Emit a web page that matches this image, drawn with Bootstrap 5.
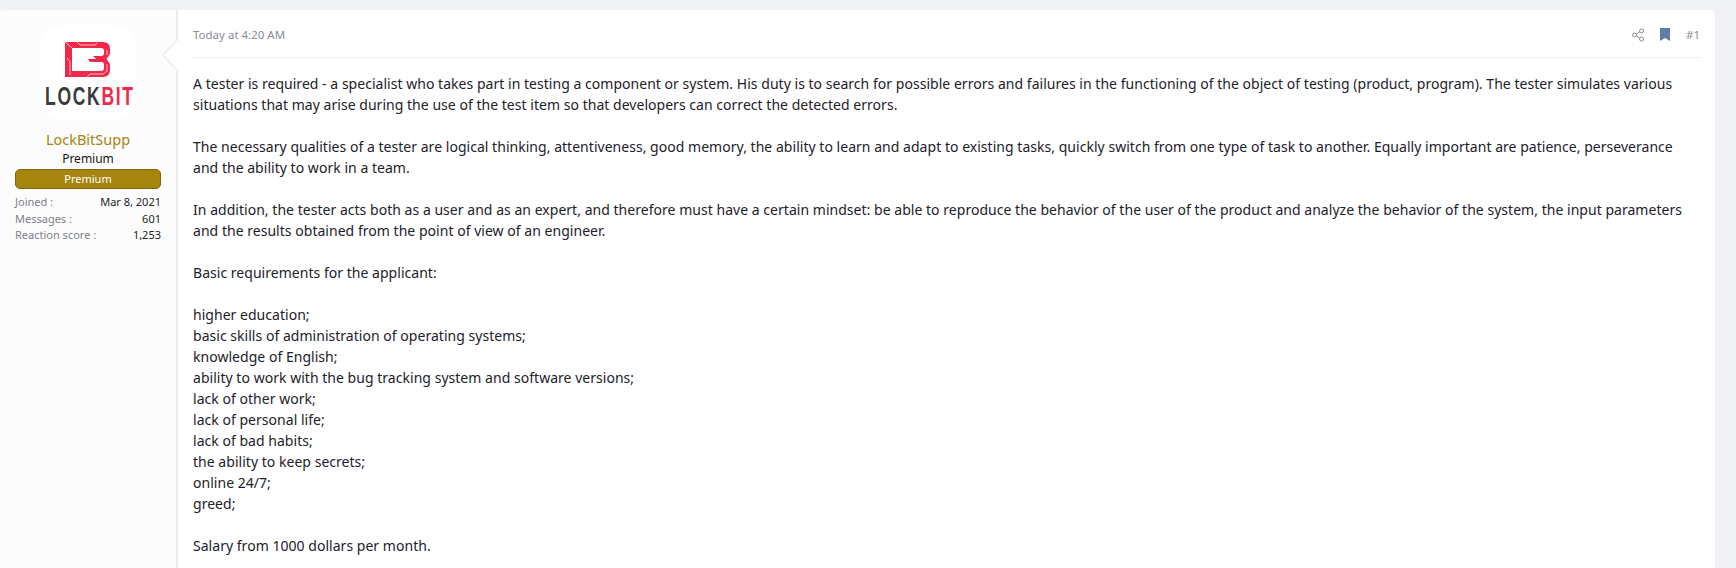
<!DOCTYPE html>
<html lang="en">
<head>
  <meta charset="UTF-8" />
  <title>Thread post</title>
  <link href="https://cdn.jsdelivr.net/npm/bootstrap@5.3.6/dist/css/bootstrap.min.css" rel="stylesheet"/>
  <style>
    html,body{height:568px;overflow:hidden}
    body{background:#f1f2f6;color:#1d2129;font-family:"Noto Sans","Open Sans",sans-serif;font-size:14px;line-height:21px;padding-top:10px}
    .post-box{width:1715px;height:558px;overflow:hidden;background:#fff;border-radius:3px 4px 0 0;box-shadow:0 0 2px rgba(0,0,0,.06)}
    .post-user{width:178px;flex:none;background:#fcfcfc;border-right:2px solid #ececef;padding:15px 15px 0;position:relative;text-align:center}
    .user-arrow{position:absolute;right:-2px;top:29px;display:block}
    .avatar-box{width:96px;height:96px;background:#fff;border-radius:24px;margin:0 auto 8px 25px}
    .user-name{color:#a5850e;font-size:14.5px;line-height:20px}
    .user-title{font-size:12px;line-height:17px;color:#141414;margin-top:1px}
    .user-banner{background:#a5850e;border:1px solid #7d650c;border-radius:5px;color:#fff;font-size:11px;line-height:18px;height:20px;margin-top:2px}
    .user-stats{font-size:11px;line-height:16.5px;margin-top:5px}
    .user-stats span:first-child{color:#7d7f88}
    .post-main{flex:1;padding:0 15px;min-width:0}
    .post-head{height:48px;padding-top:2px;border-bottom:1px solid #eeeef1;color:#8a8c94;font-size:11.5px}
    .post-body{padding-top:15px;white-space:pre;letter-spacing:.03px}
  </style>
</head>
<body>
  <div class="post-box d-flex">
    <!-- user column -->
    <div class="post-user">
      <svg class="user-arrow" width="17" height="32" viewBox="0 0 17 32"><path fill="#fff" stroke="#ececef" stroke-width="1.5" d="M16 1 2 16 16 31"/><path fill="#fff" d="M15 2H17V30H15Z"/></svg>
      <div class="avatar-box">
        <svg width="96" height="96" viewBox="0 0 96 96">
          <g transform="translate(25 17)">
            <path fill="#f0284a" fill-rule="evenodd" d="M0 0H38Q45 0 45 7V12L41.5 17 45 22V28Q45 35 38 35H0ZM7 6H36Q39 6 39 9V11Q39 14 36 14H21L25 20H36Q39 20 39 23V26Q39 29 36 29H7Z"/>
            <path fill="#fff" d="M7 6 17 17H31L27 13H21Z"/>
            <path fill="none" stroke="#fff" stroke-width=".7" d="M0 0 7 6M2 16 5 20V33M12 0 15 3H30L32 1M42 8V13M42 22V29L38 32H25L22 35"/>
          </g>
          <text transform="translate(5 80) scale(.66 1)" font-family="Liberation Sans" font-weight="700" font-size="26.5" letter-spacing="2.6"><tspan fill="#3b3b3d">LOCK</tspan><tspan fill="#f0284a">BIT</tspan></text>
        </svg>
      </div>
      <div class="user-name">LockBitSupp</div>
      <div class="user-title">Premium</div>
      <div class="user-banner">Premium</div>
      <div class="user-stats">
        <div class="d-flex justify-content-between"><span>Joined :</span><span>Mar 8, 2021</span></div>
        <div class="d-flex justify-content-between"><span>Messages :</span><span>601</span></div>
        <div class="d-flex justify-content-between"><span>Reaction score :</span><span>1,253</span></div>
      </div>
    </div>
    <!-- message -->
    <div class="post-main">
      <div class="post-head d-flex justify-content-between align-items-center">
        <span>Today at 4:20 AM</span>
        <span class="d-flex align-items-center gap-3">
          <svg width="12" height="14" viewBox="0 0 12 14" fill="none" stroke="#8a8c94" stroke-width="1"><circle cx="2.5" cy="7" r="2"/><circle cx="9.5" cy="3" r="2"/><circle cx="9.5" cy="11" r="2"/><path d="M4.3 6 7.7 4M4.3 8l3.4 2"/></svg>
          <svg width="10" height="13" viewBox="0 0 10 13"><path fill="#5c7ea8" d="M0 0H10V13L5 10 0 13Z"/></svg>
          <span>#1</span>
        </span>
      </div>
      <div class="post-body">A tester is required - a specialist who takes part in testing a component or system. His duty is to search for possible errors and failures in the functioning of the object of testing (product, program). The tester simulates various
situations that may arise during the use of the test item so that developers can correct the detected errors.

The necessary qualities of a tester are logical thinking, attentiveness, good memory, the ability to learn and adapt to existing tasks, quickly switch from one type of task to another. Equally important are patience, perseverance
and the ability to work in a team.

In addition, the tester acts both as a user and as an expert, and therefore must have a certain mindset: be able to reproduce the behavior of the user of the product and analyze the behavior of the system, the input parameters
and the results obtained from the point of view of an engineer.

Basic requirements for the applicant:

higher education;
basic skills of administration of operating systems;
knowledge of English;
ability to work with the bug tracking system and software versions;
lack of other work;
lack of personal life;
lack of bad habits;
the ability to keep secrets;
online 24/7;
greed;

Salary from 1000 dollars per month.</div>
    </div>
  </div>
  <script src="https://cdn.jsdelivr.net/npm/bootstrap@5.3.6/dist/js/bootstrap.bundle.min.js"></script>
</body>
</html>
